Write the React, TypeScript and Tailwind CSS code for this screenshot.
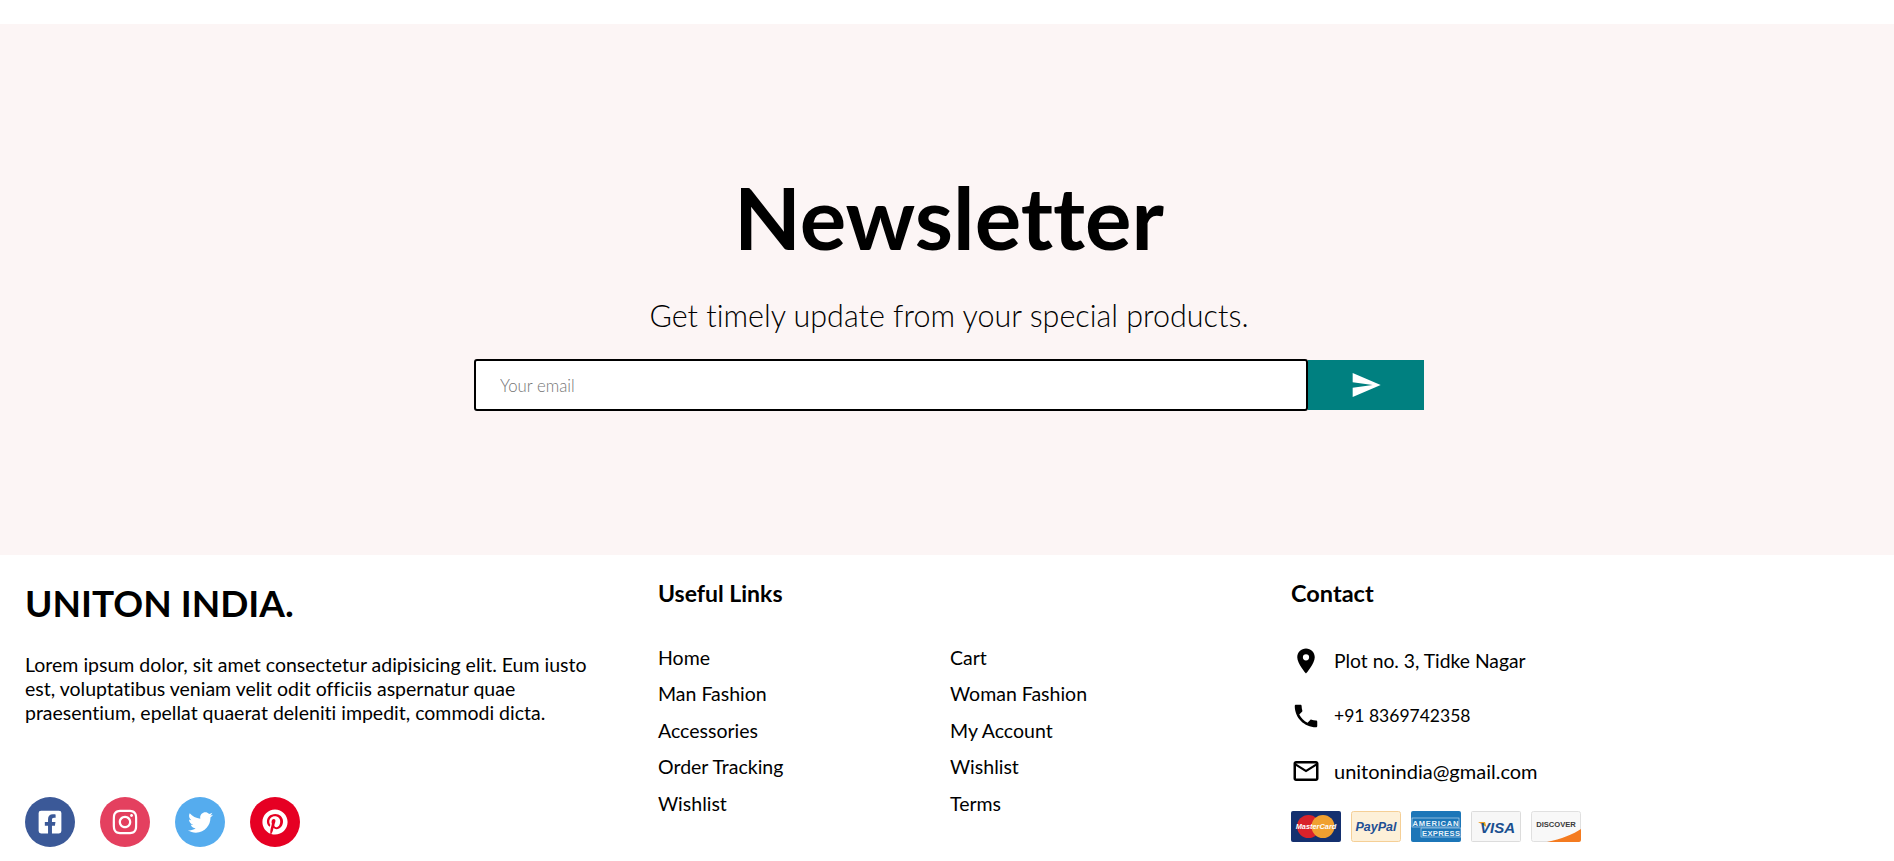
import { FaFacebookSquare, FaInstagram, FaTwitter, FaPinterest } from 'react-icons/fa'
import { MdLocationOn, MdPhone, MdMailOutline, MdSend } from 'react-icons/md'

const leftLinks = ['Home', 'Man Fashion', 'Accessories', 'Order Tracking', 'Wishlist']
const rightLinks = ['Cart', 'Woman Fashion', 'My Account', 'Wishlist', 'Terms']

function PaymentCards() {
  return (
    <div className="flex gap-[10px]">
      {/* MasterCard */}
      <svg width="50" height="31" viewBox="0 0 50 31">
        <rect width="50" height="31" rx="2" fill="#14306f" />
        <circle cx="17.500" cy="15.5" r="11.5" fill="#d9222a" />
        <circle cx="32" cy="15.5" r="11.5" fill="#f0a030" />
        <text x="25" y="18" textAnchor="middle" fontSize="7.4" fontStyle="italic" fontWeight="700" fill="#fff" fontFamily="Liberation Sans">MasterCard</text>
      </svg>
      {/* PayPal */}
      <svg width="50" height="31" viewBox="0 0 50 31">
        <rect x="0.5" y="0.5" width="49" height="30" rx="2" fill="#fdf0d8" stroke="#f5cf96" />
        <text x="25" y="20" textAnchor="middle" fontSize="12.500" fontStyle="italic" fontWeight="700" fill="#1f4f94" fontFamily="Liberation Sans">PayPal</text>
      </svg>
      {/* American Express */}
      <svg width="50" height="31" viewBox="0 0 50 31">
        <rect width="50" height="31" rx="2" fill="#1c76b8" />
        <rect x="1" y="7" width="47" height="9" fill="none" stroke="#cfe4f3" strokeWidth="0.6" />
        <rect x="10" y="17" width="40" height="9" fill="none" stroke="#cfe4f3" strokeWidth="0.6" />
        <text x="1.5" y="14.5" fontSize="7.6" textLength="46" fontWeight="700" fill="#e6f1f9" fontFamily="Liberation Sans">AMERICAN</text>
        <text x="11" y="24.5" fontSize="7.6" textLength="38" fontWeight="700" fill="#e6f1f9" fontFamily="Liberation Sans">EXPRESS</text>
      </svg>
      {/* Visa */}
      <svg width="50" height="31" viewBox="0 0 50 31">
        <rect x="0.5" y="0.5" width="49" height="30" rx="1" fill="#f7f7f7" stroke="#dcdcdc" />
        <path d="M7 11h7l1.500 5z" fill="#eda024" />
        <text x="26.500" y="22" textAnchor="middle" fontSize="15" fontStyle="italic" fontWeight="700" fill="#1a4f8f" fontFamily="Liberation Sans">VISA</text>
      </svg>
      {/* Discover */}
      <svg width="50" height="31" viewBox="0 0 50 31">
        <rect x="0.5" y="0.5" width="49" height="30" rx="2" fill="#f8f8f8" stroke="#e0e0e0" />
        <path d="M16 31 C30 28 43 23 50 18 V29 a2 2 0 0 1 -2 2 z" fill="#f47b20" />
        <text x="25" y="16" textAnchor="middle" fontSize="7.6" fontWeight="700" fill="#3a3a3a" fontFamily="Liberation Sans">DISCOVER</text>
      </svg>
    </div>
  )
}

export default function App() {
  return (
    <div className="bg-white pt-6 text-black font-['Lato',sans-serif] [font-variant-ligatures:none]">
      {/* Newsletter */}
      <section className="h-[531px] bg-[#fcf5f5] flex flex-col items-center pl-1 pt-[145px]">
        <h1 className="text-[87px] leading-[96px] font-bold">Newsletter</h1>
        <p className="text-[30.5px] leading-9 font-light mt-[32px]">Get timely update from your special products.</p>
        <form className="flex w-[950px] mt-[26px]">
          <input
            className="flex-1 h-[52px] bg-white border-2 border-black rounded-[3px] px-6 text-[16.8px] font-light placeholder:text-[#757575] outline-none"
            placeholder="Your email"
          />
          <button type="button" className="w-[116px] h-[50px] mt-px bg-[#008080] flex items-center justify-center text-white">
            <MdSend size={32} />
          </button>
        </form>
      </section>

      {/* Footer */}
      <footer className="h-[306px] px-[25px] grid grid-cols-[633px_633px_1fr] overflow-hidden">
        <div className="flex flex-col">
          <h2 className="text-[37px] leading-[48px] font-bold mt-[24px]">UNITON INDIA.</h2>
          <p className="text-[19.5px] leading-6 w-[580px] mt-[26px]">
            Lorem ipsum dolor, sit amet consectetur adipisicing elit. Eum iusto est, voluptatibus veniam velit odit officiis aspernatur quae praesentium, epellat quaerat deleniti impedit, commodi dicta.
          </p>
          <div className="flex gap-[25px] mt-[72px]">
            <span className="w-[50px] h-[50px] rounded-full bg-[#3b5998] text-white flex items-center justify-center"><FaFacebookSquare size={26} /></span>
            <span className="w-[50px] h-[50px] rounded-full bg-[#e4405f] text-white flex items-center justify-center"><FaInstagram size={28} /></span>
            <span className="w-[50px] h-[50px] rounded-full bg-[#55acee] text-white flex items-center justify-center"><FaTwitter size={25} /></span>
            <span className="w-[50px] h-[50px] rounded-full bg-[#e60023] text-white flex items-center justify-center"><FaPinterest size={26} /></span>
          </div>
        </div>

        <div>
          <h3 className="text-[23px] leading-7 font-bold mt-[24px]">Useful Links</h3>
          <div className="grid grid-cols-2 w-[584px] mt-[33px] text-[19.5px]">
            <ul>
              {leftLinks.map((l) => (
                <li key={l} className="leading-[36.4px]">{l}</li>
              ))}
            </ul>
            <ul>
              {rightLinks.map((l) => (
                <li key={l} className="leading-[36.4px]">{l}</li>
              ))}
            </ul>
          </div>
        </div>

        <div>
          <h3 className="text-[23.5px] leading-7 font-bold mt-[24px]">Contact</h3>
          <div className="flex flex-col gap-[25px] mt-[39px] text-[19.3px] leading-6">
            <div className="flex items-center gap-[13px]"><MdLocationOn size={30} /><span>Plot no. 3, Tidke Nagar</span></div>
            <div className="flex items-center gap-[13px]"><MdPhone size={30} /><span className="text-[17.5px]">+91 8369742358</span></div>
            <div className="flex items-center gap-[13px]"><MdMailOutline size={30} /><span className="text-[20px]">unitonindia@gmail.com</span></div>
          </div>
          <div className="mt-[25px]">
            <PaymentCards />
          </div>
        </div>
      </footer>
    </div>
  )
}
